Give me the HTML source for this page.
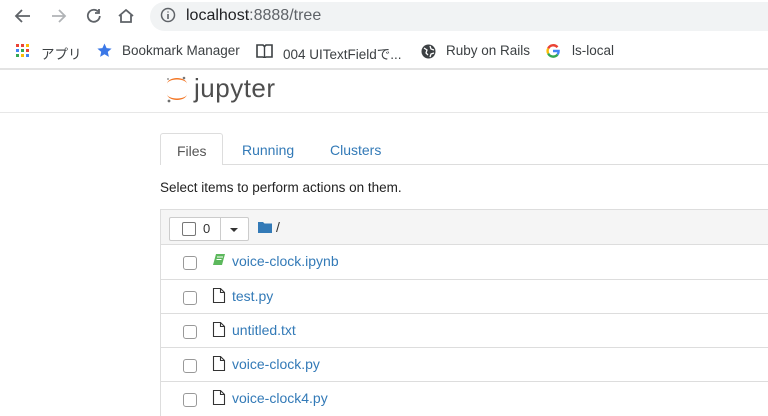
<!DOCTYPE html>
<html><head><style>
*{margin:0;padding:0;box-sizing:border-box}
body{width:768px;height:416px;overflow:hidden;background:#fff;font-family:"Liberation Sans","Noto Sans CJK JP",sans-serif;position:relative}
.a{position:absolute}
.pill{left:150px;top:2px;width:640px;height:29px;background:#f1f3f4;border-radius:15px}
.url{left:186px;top:7px;font-size:16px;color:#202124}
.bm{top:43px;font-size:13.5px;color:#3c4043}
.link{color:#337ab7;font-size:14px}
.row{left:160px;width:620px;height:34px;border-top:1px solid #ddd}
.cb{position:absolute;left:23px;top:11px;width:14px;height:14px;border:1px solid #999;border-radius:3px;background:#fff}
.fn{position:absolute;left:72px;top:8px;font-size:14px;color:#337ab7}
.ic{position:absolute;left:52px;top:7px}
</style></head><body>
<svg class="a" style="left:12px;top:6px" width="130" height="20" viewBox="0 0 130 20" fill="none" stroke-width="1.8">
<path d="M18 10H5M10 4L4 10l6 6" stroke="#5f6368"/>
<path d="M40 10h13M47 4l6 6-6 6" stroke="#b0b3b6"/>
<path d="M86 5.5a6 6 0 1 0 1.8 4.5M87 3v4h-4" stroke="#5f6368"/>
<path d="M107 10l7-6 7 6M109 9v7h10V9" stroke="#5f6368"/>
</svg>
<div class="a pill"></div>
<svg class="a" style="left:160px;top:7px" width="16" height="16"><circle cx="8" cy="8" r="6.5" stroke="#5f6368" stroke-width="1.5" fill="none"/><path d="M8 7v5M8 4.5v1" stroke="#5f6368" stroke-width="1.6"/></svg>
<div class="a url">localhost<span style="color:#5f6368">:8888/tree</span></div>
<svg class="a" style="left:16px;top:44px" width="14" height="14">
<rect x="0" y="0" width="3" height="3" fill="#ea4335"/><rect x="5" y="0" width="3" height="3" fill="#ea4335"/><rect x="10" y="0" width="3" height="3" fill="#fbbc05"/>
<rect x="0" y="5" width="3" height="3" fill="#4285f4"/><rect x="5" y="5" width="3" height="3" fill="#34a853"/><rect x="10" y="5" width="3" height="3" fill="#ea4335"/>
<rect x="0" y="10" width="3" height="3" fill="#34a853"/><rect x="5" y="10" width="3" height="3" fill="#fbbc05"/><rect x="10" y="10" width="3" height="3" fill="#4285f4"/></svg>
<div class="a bm" style="left:41px">アプリ</div>
<svg class="a" style="left:97px;top:43px" width="15" height="15"><path d="M7.5 0.5l2.1 4.6 5 .5-3.8 3.3 1.1 5-4.4-2.6-4.4 2.6 1.1-5L.4 5.6l5-.5z" fill="#3b78e7"/></svg>
<div class="a bm" style="left:122px">Bookmark Manager</div>
<svg class="a" style="left:256px;top:44px" width="17" height="14"><path d="M1 1h6l1.5 1.5L10 1h6v12h-6l-1.5 1-1.5-1H1z" stroke="#3c4043" stroke-width="1.6" fill="none"/><path d="M8.5 3v10" stroke="#3c4043" stroke-width="1.4"/></svg>
<div class="a bm" style="left:283px">004 UITextFieldで...</div>
<svg class="a" style="left:421px;top:44px" width="15" height="15"><circle cx="7.5" cy="7.5" r="7" fill="#3c4043"/><path d="M3 4l3 2-1 3 2 2M9 2l1 3 3 1M9 13l1-3 3-1" stroke="#fff" stroke-width="1.3" fill="none"/></svg>
<div class="a bm" style="left:446px">Ruby on Rails</div>
<svg class="a" style="left:546px;top:44px" width="14" height="14" viewBox="0 0 14 14" fill="none" stroke-width="2.4"><path d="M11.5 3.2A5.6 5.6 0 0 0 2.2 4.5" stroke="#ea4335"/><path d="M2.2 4.5a5.6 5.6 0 0 0 0 5" stroke="#fbbc05"/><path d="M2.2 9.5a5.6 5.6 0 0 0 9.4 1" stroke="#34a853"/><path d="M11.6 10.5A5.6 5.6 0 0 0 12.6 7H7" stroke="#4285f4"/></svg>
<div class="a bm" style="left:572px">ls-local</div>
<div class="a" style="left:0;top:68px;width:768px;height:2px;background:#e3e3e3"></div>
<svg class="a" style="left:164px;top:74px" width="26" height="30"><path d="M3 10a10 6 0 0 1 20 0a10 4.5 0 0 0-20 0z" fill="#f37726"/><path d="M3 20a10 6 0 0 0 20 0a10 4.5 0 0 1-20 0z" fill="#f37726"/><circle cx="20" cy="4" r="1.3" fill="#767677"/><circle cx="4" cy="5" r="1" fill="#989798"/><circle cx="5" cy="27" r="1.4" fill="#6f7070"/></svg>
<div class="a" style="left:194px;top:73px;font-size:26px;color:#4e4e4e;letter-spacing:0.5px">jupyter</div>
<div class="a" style="left:0;top:112px;width:768px;height:1px;background:#e7e7e7"></div>
<div class="a" style="left:160px;top:164px;width:608px;height:1px;background:#ddd"></div>
<div class="a" style="left:160px;top:133px;width:63px;height:32px;border:1px solid #ddd;border-bottom:none;background:#fff;border-radius:3px 3px 0 0;font-size:14px;color:#555;padding:9px 0 0 16px">Files</div>
<div class="a link" style="left:242px;top:142px">Running</div>
<div class="a link" style="left:330px;top:142px">Clusters</div>
<div class="a" style="left:160px;top:180px;font-size:13.5px;color:#222">Select items to perform actions on them.</div>
<div class="a" style="left:160px;top:209px;width:620px;height:36px;background:#f5f5f5;border:1px solid #ddd"></div>
<div class="a" style="left:169px;top:217px;width:80px;height:24px;border:1px solid #ccc;border-radius:2px;background:#fff"></div>
<div class="a" style="left:220px;top:217px;width:1px;height:24px;background:#ccc"></div>
<div class="a" style="left:182px;top:222px;width:14px;height:14px;border:1px solid #777;border-radius:2px"></div>
<div class="a" style="left:203px;top:221px;font-size:13px;color:#333">0</div>
<div class="a" style="left:230px;top:228px;border-left:4px solid transparent;border-right:4px solid transparent;border-top:4px solid #333"></div>
<svg class="a" style="left:258px;top:221px" width="14" height="12"><path d="M0 1h5l1.5 1.5H14V12H0z" fill="#337ab7"/></svg>
<div class="a" style="left:276px;top:219px;font-size:14px;color:#333">/</div>
<div class="a row" style="top:245px;border-top:none"><div class="cb"></div><svg class="ic" width="14" height="16"><path d="M4 2h9l-3 11H1z" fill="#5cb85c"/><path d="M5 5h6M4.5 7.5h5" stroke="#fff" stroke-width="1"/></svg><div class="fn">voice-clock.ipynb</div></div>
<div class="a row" style="top:279px"><div class="cb"></div><svg class="ic" width="14" height="17"><path d="M1.5 1.5h7l4 4v10h-11z M8.5 1.5v4h4" stroke="#333" stroke-width="1.1" fill="none"/></svg><div class="fn">test.py</div></div>
<div class="a row" style="top:313px"><div class="cb"></div><svg class="ic" width="14" height="17"><path d="M1.5 1.5h7l4 4v10h-11z M8.5 1.5v4h4" stroke="#333" stroke-width="1.1" fill="none"/></svg><div class="fn">untitled.txt</div></div>
<div class="a row" style="top:347px"><div class="cb"></div><svg class="ic" width="14" height="17"><path d="M1.5 1.5h7l4 4v10h-11z M8.5 1.5v4h4" stroke="#333" stroke-width="1.1" fill="none"/></svg><div class="fn">voice-clock.py</div></div>
<div class="a row" style="top:381px"><div class="cb"></div><svg class="ic" width="14" height="17"><path d="M1.5 1.5h7l4 4v10h-11z M8.5 1.5v4h4" stroke="#333" stroke-width="1.1" fill="none"/></svg><div class="fn">voice-clock4.py</div></div>
<div class="a" style="left:160px;top:245px;width:1px;height:171px;background:#ddd"></div>
</body></html>
